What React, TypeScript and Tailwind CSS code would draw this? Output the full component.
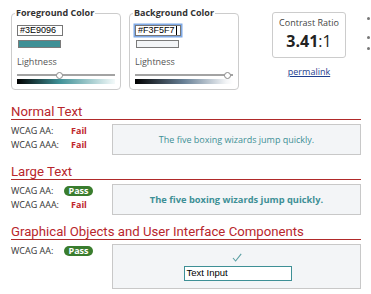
import React from "react";

function ColorField({
  legend,
  value,
  swatch,
  focused,
  thumbLeft,
  gradient,
  className,
}: {
  legend: string;
  value: string;
  swatch: string;
  focused?: boolean;
  thumbLeft: string;
  gradient: string;
  className?: string;
}) {
  return (
    <fieldset
      className={`w-[110px] border border-[#cccccc] rounded-[4px] px-[5px] pt-[5px] pb-[5px] ${className ?? ""}`}
    >
      <legend className="ml-[-2px] px-[1px] font-bold leading-[12px] text-[9px] text-[#333]">
        {legend}
      </legend>
      <div
        className={`mt-[1px] flex items-center w-[46px] h-[11px] border border-[#767676] bg-white px-[2px] font-['Liberation_Sans'] text-[9px] leading-[9px] text-black ${
          focused ? "ring-[1.5px] ring-[#7fa9e6]" : ""
        }`}
      >
        <span>{value}</span>
        {focused && <span className="ml-[1px] w-[1px] h-[9px] bg-black" />}
      </div>
      <div className={`mt-[4px] ml-[1px] w-[43px] h-[8px] border border-[#7a7a7a] ${swatch}`} />
      <div className="mt-[8px] leading-[12px] text-[#555]">Lightness</div>
      <div className="relative mt-[3px] h-[8px]">
        <div className="absolute left-0 right-0 top-[3px] h-[1.5px] bg-[#a3a3a3]" />
        <div
          className={`absolute top-[0.5px] w-[7px] h-[7px] rounded-full bg-white border border-[#8a8a8a] ${thumbLeft}`}
        />
      </div>
      <div className={`h-[5px] ${gradient}`} />
    </fieldset>
  );
}

function Pass() {
  return (
    <span className="inline-block ml-[-7px] rounded-full bg-[#3a7d2e] text-white font-bold px-[4.5px] h-[10px] leading-[10px] text-[9px]">
      Pass
    </span>
  );
}

function Fail() {
  return <span className="font-bold text-[#c0272d]">Fail</span>;
}

function Heading({ children, className }: { children: React.ReactNode; className?: string }) {
  return (
    <h2
      className={`w-[350px] border-b border-[#b02a2a] font-['Roboto'] text-[13.2px] leading-[15px] text-[#b8262c] ${className ?? ""}`}
    >
      {children}
    </h2>
  );
}

export default function App() {
  return (
    <div className="w-[371px] h-[294px] overflow-hidden bg-white font-['Open_Sans',sans-serif] text-[9px] text-[#333] pl-[11px] pt-[7px]">
      <div className="flex items-start">
        <ColorField
          legend="Foreground Color"
          value="#3E9096"
          swatch="bg-[#3e9096]"
          thumbLeft="left-[39px]"
          gradient="bg-[linear-gradient(to_right,#000000,#3e9096_43%,#f4fafa)]"
        />
        <ColorField
          className="ml-[8px]"
          legend="Background Color"
          value="#F3F5F7"
          swatch="bg-[#f3f5f7]"
          focused
          thumbLeft="left-[89px]"
          gradient="bg-[linear-gradient(to_right,#000000,#688096_50%,#f3f5f7_93%,#ffffff)]"
        />
        <div className="ml-[33px] mt-[5px] flex flex-col items-center">
          <div className="w-[74px] h-[46px] border border-[#cccccc] rounded-[3px] flex flex-col items-center pt-[4px]">
            <div className="leading-[12px] text-[#444]">Contrast Ratio</div>
            <div className="leading-[24px] text-[16px] text-[#222]">
              <span className="font-bold">3.41</span>:1
            </div>
          </div>
          <a className="mt-[8px] leading-[12px] text-[#1f3f8f] underline">permalink</a>
        </div>
        <div className="ml-[21px] mt-[10px] flex flex-col">
          <div className="w-[3px] h-[3px] rounded-full bg-[#777]" />
          <div className="mt-[16px] w-[3px] h-[3px] rounded-full bg-[#777]" />
          <div className="mt-[8px] w-[3px] h-[3px] rounded-full bg-[#777]" />
        </div>
      </div>

      <Heading className="mt-[14px]">Normal Text</Heading>
      <div className="flex mt-[4px]">
        <div className="w-[101px] grid grid-cols-[60px_auto] leading-[14px] content-start">
          <span>WCAG AA:</span>
          <Fail />
          <span>WCAG AAA:</span>
          <Fail />
        </div>
        <div className="w-[249px] h-[31px] border border-[#c8c8c8] bg-[#f3f5f7] flex items-center justify-center text-[#3e9096] text-[9px]">
          The five boxing wizards jump quickly.
        </div>
      </div>

      <Heading className="mt-[9px]">Large Text</Heading>
      <div className="flex mt-[4px]">
        <div className="w-[101px] grid grid-cols-[60px_auto] leading-[14px] content-start items-center">
          <span>WCAG AA:</span>
          <span className="flex items-center h-[14px]">
            <Pass />
          </span>
          <span>WCAG AAA:</span>
          <Fail />
        </div>
        <div className="w-[249px] h-[31px] border border-[#c8c8c8] bg-[#f3f5f7] flex items-center justify-center text-[#3e9096] text-[9.3px] font-bold">
          The five boxing wizards jump quickly.
        </div>
      </div>

      <Heading className="mt-[9px]">Graphical Objects and User Interface Components</Heading>
      <div className="flex mt-[4px]">
        <div className="w-[101px] grid grid-cols-[60px_auto] leading-[14px] content-start items-center">
          <span>WCAG AA:</span>
          <span className="flex items-center h-[14px]">
            <Pass />
          </span>
        </div>
        <div className="w-[249px] h-[45px] border border-[#c8c8c8] bg-[#f3f5f7] flex flex-col items-center pt-[8px]">
          <svg width="10" height="9" viewBox="0 0 10 9" className="ml-[1px]">
            <path d="M1 5 L3.6 8 L9.2 0.8" fill="none" stroke="#5a9fa3" strokeWidth="1.1" />
          </svg>
          <div className="mt-[4px] ml-[2px] w-[108px] h-[15px] border border-[#3e9096] bg-white flex items-center px-[2px] font-['Liberation_Sans'] text-[9.5px] text-black">
            Text Input
          </div>
        </div>
      </div>
    </div>
  );
}
